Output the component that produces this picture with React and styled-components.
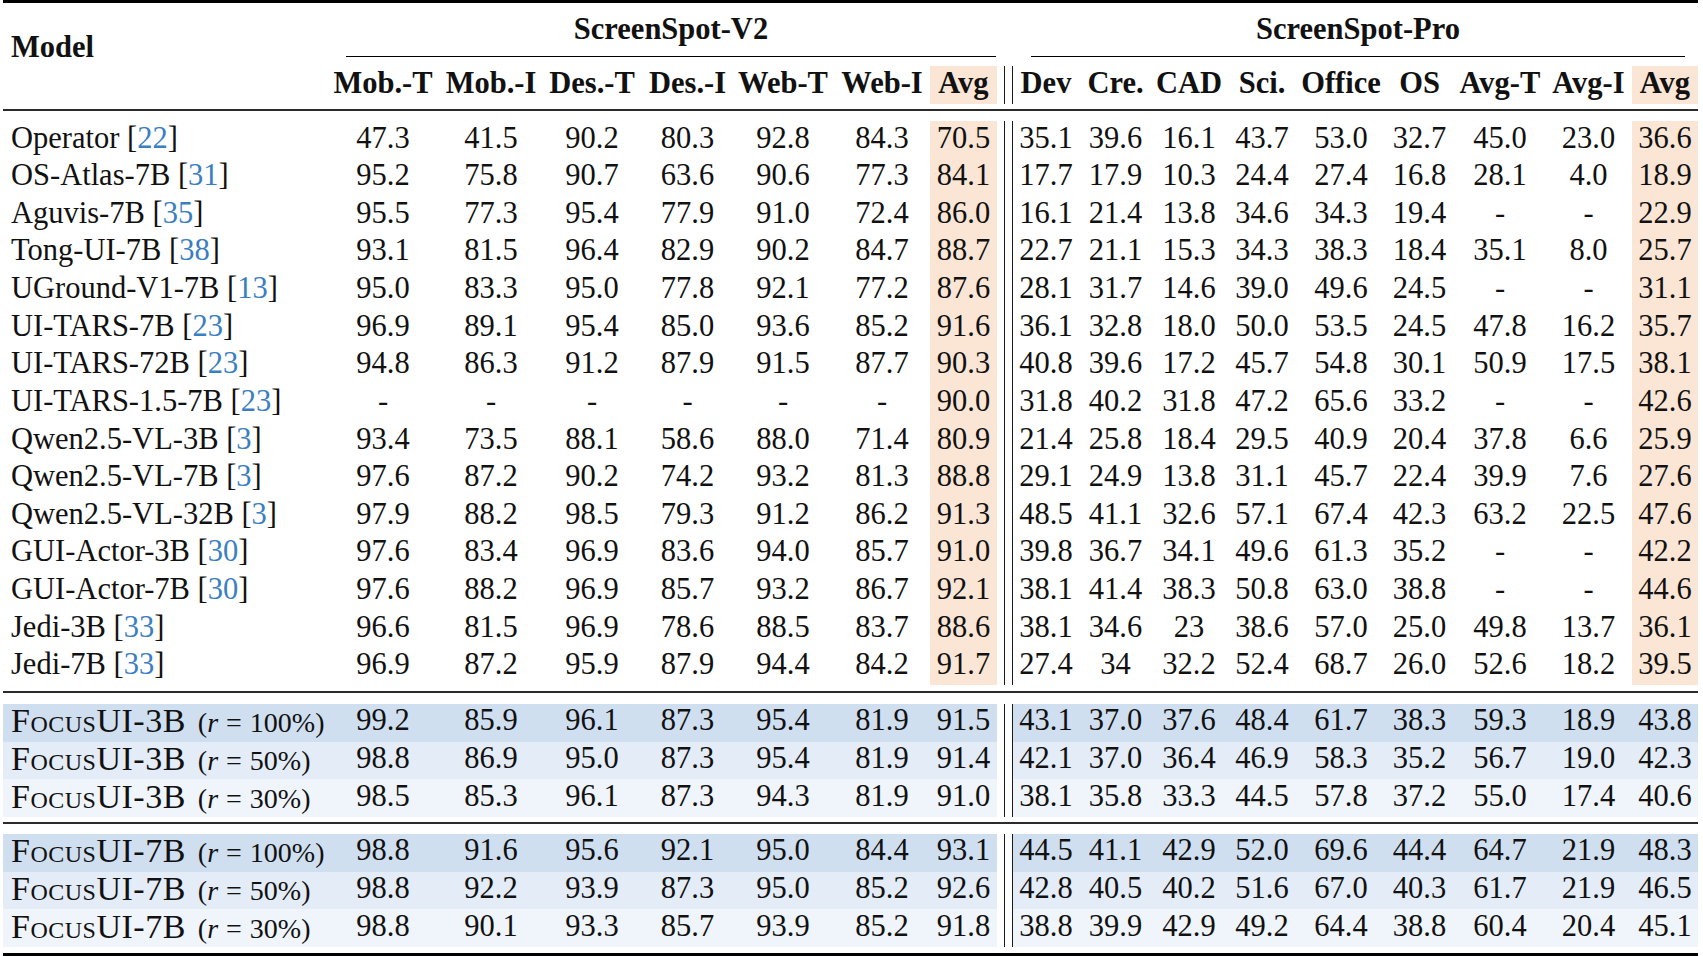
import React from "react";
import styled, { createGlobalStyle } from "styled-components";

const GlobalStyle = createGlobalStyle`
  html, body { margin: 0; padding: 0; background: #ffffff; }
  #root { width: 1703px; height: 956px; overflow: hidden; }
`;

const COLS = [322, 116, 100, 102, 89, 102, 96, 67, 16, 66, 73, 74, 72, 86, 71, 90, 87, 66];
const NCOLS = COLS.length;

const BLUE = ["#cfdff0", "#e3ecf7", "#f0f5fb"];
const ORANGE = "#fbe6d6";
const INK = "#111111";

const Table = styled.table`
  border-collapse: collapse;
  border-spacing: 0;
  table-layout: fixed;
  width: 1695px;
  margin-left: 3px;
  font-family: "Liberation Serif", "Times New Roman", serif;
  font-size: 30.5px;
  line-height: 32px;
  color: ${INK};
`;

const Col = styled.col`
  width: ${(p) => p.$w}px;
`;

const Row = styled.tr`
  height: ${(p) => p.$h}px;
`;

const RuleCell = styled.td`
  padding: ${(p) => p.$top}px 0 0 0;
  vertical-align: top;
  height: ${(p) => p.$h}px;
  box-sizing: border-box;
`;

const RuleLine = styled.div`
  height: ${(p) => p.$t}px;
  background: ${(p) => p.$c || "#000"};
`;

const ModelHead = styled.th`
  font-weight: 700;
  text-align: left;
  vertical-align: top;
  padding: 27.7px 0 0 8px;
  white-space: nowrap;
`;

const GroupHead = styled.th`
  font-weight: 700;
  text-align: center;
  vertical-align: top;
  padding: 10px ${(p) => p.$r}px 0 ${(p) => p.$l}px;
  white-space: nowrap;
`;

const CmidCell = styled.td`
  padding: 0;
  vertical-align: top;
`;

const CmidLine = styled.div`
  height: 1px;
  background: #000;
  margin: 0 ${(p) => p.$r}px 0 ${(p) => p.$l}px;
`;

const HeadCell = styled.th`
  font-weight: 700;
  text-align: center;
  vertical-align: top;
  padding: 0.5px 0 0 0;
  white-space: nowrap;
  background: ${(p) => p.$bg || "transparent"};
`;

const SepCell = styled.td`
  padding: 0;
  background: ${(p) =>
    p.$lines
      ? "linear-gradient(to right, transparent 0 7px, #1a1a1a 7px 8px, transparent 8px 15px, #1a1a1a 15px 16px)"
      : "transparent"};
`;

const ModelCell = styled.td`
  text-align: left;
  vertical-align: top;
  padding: 0.5px 0 0 8px;
  white-space: nowrap;
  background: ${(p) => p.$bg || "transparent"};
`;

const NumCell = styled.td`
  text-align: center;
  vertical-align: top;
  padding: 0.5px 0 0 0;
  white-space: nowrap;
  background: ${(p) => p.$bg || "transparent"};
`;

const Cite = styled.span`
  color: #3b7fc2;
`;

const FocusName = styled.span`
  font-size: 34px;
  line-height: 1;
  font-variant: small-caps;
  letter-spacing: 0.5px;
`;

const Ratio = styled.span`
  font-size: 28px;
  line-height: 1;
  margin-left: 12px;
`;

const Var = styled.i`
  font-style: italic;
`;

const Eq = styled.span`
  margin: 0 8px;
`;

const V2_HEAD = ["Mob.-T", "Mob.-I", "Des.-T", "Des.-I", "Web-T", "Web-I", "Avg"];
const PRO_HEAD = ["Dev", "Cre.", "CAD", "Sci.", "Office", "OS", "Avg-T", "Avg-I", "Avg"];

const BODY = [
  ["Operator", "22", "47.3 41.5 90.2 80.3 92.8 84.3 70.5", "35.1 39.6 16.1 43.7 53.0 32.7 45.0 23.0 36.6"],
  ["OS-Atlas-7B", "31", "95.2 75.8 90.7 63.6 90.6 77.3 84.1", "17.7 17.9 10.3 24.4 27.4 16.8 28.1 4.0 18.9"],
  ["Aguvis-7B", "35", "95.5 77.3 95.4 77.9 91.0 72.4 86.0", "16.1 21.4 13.8 34.6 34.3 19.4 - - 22.9"],
  ["Tong-UI-7B", "38", "93.1 81.5 96.4 82.9 90.2 84.7 88.7", "22.7 21.1 15.3 34.3 38.3 18.4 35.1 8.0 25.7"],
  ["UGround-V1-7B", "13", "95.0 83.3 95.0 77.8 92.1 77.2 87.6", "28.1 31.7 14.6 39.0 49.6 24.5 - - 31.1"],
  ["UI-TARS-7B", "23", "96.9 89.1 95.4 85.0 93.6 85.2 91.6", "36.1 32.8 18.0 50.0 53.5 24.5 47.8 16.2 35.7"],
  ["UI-TARS-72B", "23", "94.8 86.3 91.2 87.9 91.5 87.7 90.3", "40.8 39.6 17.2 45.7 54.8 30.1 50.9 17.5 38.1"],
  ["UI-TARS-1.5-7B", "23", "- - - - - - 90.0", "31.8 40.2 31.8 47.2 65.6 33.2 - - 42.6"],
  ["Qwen2.5-VL-3B", "3", "93.4 73.5 88.1 58.6 88.0 71.4 80.9", "21.4 25.8 18.4 29.5 40.9 20.4 37.8 6.6 25.9"],
  ["Qwen2.5-VL-7B", "3", "97.6 87.2 90.2 74.2 93.2 81.3 88.8", "29.1 24.9 13.8 31.1 45.7 22.4 39.9 7.6 27.6"],
  ["Qwen2.5-VL-32B", "3", "97.9 88.2 98.5 79.3 91.2 86.2 91.3", "48.5 41.1 32.6 57.1 67.4 42.3 63.2 22.5 47.6"],
  ["GUI-Actor-3B", "30", "97.6 83.4 96.9 83.6 94.0 85.7 91.0", "39.8 36.7 34.1 49.6 61.3 35.2 - - 42.2"],
  ["GUI-Actor-7B", "30", "97.6 88.2 96.9 85.7 93.2 86.7 92.1", "38.1 41.4 38.3 50.8 63.0 38.8 - - 44.6"],
  ["Jedi-3B", "33", "96.6 81.5 96.9 78.6 88.5 83.7 88.6", "38.1 34.6 23 38.6 57.0 25.0 49.8 13.7 36.1"],
  ["Jedi-7B", "33", "96.9 87.2 95.9 87.9 94.4 84.2 91.7", "27.4 34 32.2 52.4 68.7 26.0 52.6 18.2 39.5"],
];

const FOCUS = [
  [
    ["FocusUI-3B", "100%", "99.2 85.9 96.1 87.3 95.4 81.9 91.5", "43.1 37.0 37.6 48.4 61.7 38.3 59.3 18.9 43.8"],
    ["FocusUI-3B", "50%", "98.8 86.9 95.0 87.3 95.4 81.9 91.4", "42.1 37.0 36.4 46.9 58.3 35.2 56.7 19.0 42.3"],
    ["FocusUI-3B", "30%", "98.5 85.3 96.1 87.3 94.3 81.9 91.0", "38.1 35.8 33.3 44.5 57.8 37.2 55.0 17.4 40.6"],
  ],
  [
    ["FocusUI-7B", "100%", "98.8 91.6 95.6 92.1 95.0 84.4 93.1", "44.5 41.1 42.9 52.0 69.6 44.4 64.7 21.9 48.3"],
    ["FocusUI-7B", "50%", "98.8 92.2 93.9 87.3 95.0 85.2 92.6", "42.8 40.5 40.2 51.6 67.0 40.3 61.7 21.9 46.5"],
    ["FocusUI-7B", "30%", "98.8 90.1 93.3 85.7 93.9 85.2 91.8", "38.8 39.9 42.9 49.2 64.4 38.8 60.4 20.4 45.1"],
  ],
];

function Rule({ h, top, t, c }) {
  return (
    <Row $h={h}>
      <RuleCell colSpan={NCOLS} $h={h} $top={top}>
        <RuleLine $t={t} $c={c} />
      </RuleCell>
    </Row>
  );
}

function BodyRow({ name, cite, v2, pro }) {
  const a = v2.split(" ");
  const b = pro.split(" ");
  return (
    <Row $h={37.63}>
      <ModelCell>
        {name} [<Cite>{cite}</Cite>]
      </ModelCell>
      {a.map((v, i) => (
        <NumCell key={"a" + i} $bg={i === a.length - 1 ? ORANGE : undefined}>
          {v}
        </NumCell>
      ))}
      <SepCell $lines />
      {b.map((v, i) => (
        <NumCell key={"b" + i} $bg={i === b.length - 1 ? ORANGE : undefined}>
          {v}
        </NumCell>
      ))}
    </Row>
  );
}

function FocusRow({ name, ratio, v2, pro, shade }) {
  return (
    <Row $h={37.67}>
      <ModelCell $bg={shade}>
        <FocusName>{name}</FocusName>
        <Ratio>
          (<Var>r</Var>
          <Eq>=</Eq>
          {ratio})
        </Ratio>
      </ModelCell>
      {v2.split(" ").map((v, i) => (
        <NumCell key={"a" + i} $bg={shade}>
          {v}
        </NumCell>
      ))}
      <SepCell $lines />
      {pro.split(" ").map((v, i) => (
        <NumCell key={"b" + i} $bg={shade}>
          {v}
        </NumCell>
      ))}
    </Row>
  );
}

export default function App() {
  return (
    <>
      <GlobalStyle />
      <Table>
        <colgroup>
          {COLS.map((w, i) => (
            <Col key={i} $w={w} />
          ))}
        </colgroup>
        <thead>
          <Rule h={3} top={0} t={3} />
          <Row $h={53}>
            <ModelHead rowSpan={3}>Model</ModelHead>
            <GroupHead colSpan={7} $l={21} $r={1}>
              ScreenSpot-V2
            </GroupHead>
            <SepCell rowSpan={2} />
            <GroupHead colSpan={9} $l={18} $r={13}>
              ScreenSpot-Pro
            </GroupHead>
          </Row>
          <Row $h={10}>
            <CmidCell colSpan={7}>
              <CmidLine $l={21} $r={1} />
            </CmidCell>
            <CmidCell colSpan={9}>
              <CmidLine $l={18} $r={13} />
            </CmidCell>
          </Row>
          <Row $h={38}>
            {V2_HEAD.map((h, i) => (
              <HeadCell key={"v" + i} $bg={i === V2_HEAD.length - 1 ? ORANGE : undefined}>
                {h}
              </HeadCell>
            ))}
            <SepCell $lines />
            {PRO_HEAD.map((h, i) => (
              <HeadCell key={"p" + i} $bg={i === PRO_HEAD.length - 1 ? ORANGE : undefined}>
                {h}
              </HeadCell>
            ))}
          </Row>
        </thead>
        <tbody>
          <Rule h={17} top={5} t={2} c="#2b2b2b" />
          {BODY.map((r, i) => (
            <BodyRow key={i} name={r[0]} cite={r[1]} v2={r[2]} pro={r[3]} />
          ))}
          <Rule h={18.5} top={6} t={2} c="#2b2b2b" />
          {FOCUS[0].map((r, i) => (
            <FocusRow key={"f0" + i} name={r[0]} ratio={r[1]} v2={r[2]} pro={r[3]} shade={BLUE[i]} />
          ))}
          <Rule h={17} top={5.5} t={2} c="#2b2b2b" />
          {FOCUS[1].map((r, i) => (
            <FocusRow key={"f1" + i} name={r[0]} ratio={r[1]} v2={r[2]} pro={r[3]} shade={BLUE[i]} />
          ))}
          <Rule h={9} top={6} t={3} />
        </tbody>
      </Table>
    </>
  );
}
